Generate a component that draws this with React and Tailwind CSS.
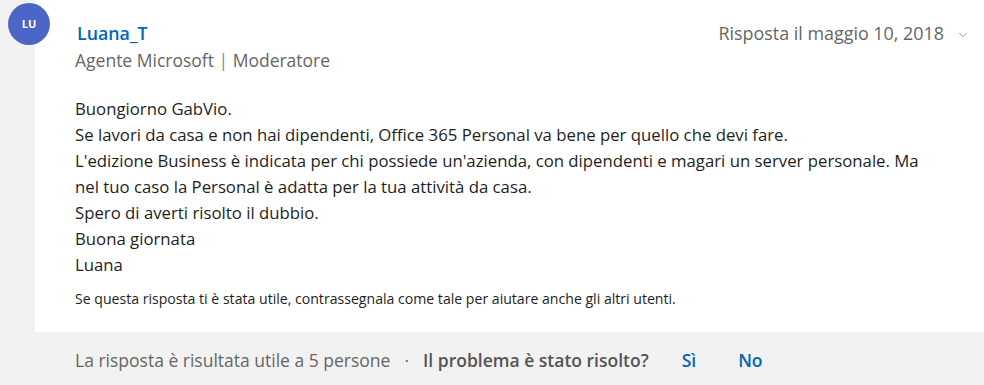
import { ChevronDown } from 'lucide-react'

export default function App() {
  return (
    <div className="w-[984px] h-[385px] flex bg-[#f2f2f2] overflow-hidden font-['Open_Sans','Liberation_Sans',sans-serif]">
      {/* colonna sinistra */}
      <div className="w-[35px] shrink-0 relative">
        <div className="absolute left-[8px] top-[3px] w-[42px] h-[42px] rounded-full bg-[#4b66c6] flex items-center justify-center z-10">
          <span className="text-white text-[11px] font-bold">LU</span>
        </div>
      </div>

      <div className="flex-1 flex flex-col bg-white">
        <div className="flex-1 pl-[40px] pr-[14px]">
          <div className="flex justify-between pt-[21px]">
            <div>
              <div className="text-[#0067b8] text-[17.8px] font-semibold leading-[24px] pl-[2px]">Luana_T</div>
              <div className="text-[#666] text-[17.5px] leading-[26px] pt-[2px]">
                Agente Microsoft <span className="text-[#888]">|</span> Moderatore
              </div>
            </div>
            <div className="flex items-start gap-[12px] text-[#666] text-[17.9px] leading-[24px]">
              <span>Risposta il maggio 10, 2018</span>
              <ChevronDown size={14} strokeWidth={1.5} className="mt-[7px] text-[#888]" />
            </div>
          </div>

          <div className="mt-[23px] mr-[30px] text-[16.75px] leading-[26px] text-[#1e1e1e]">
            <p>Buongiorno GabVio.</p>
            <p>Se lavori da casa e non hai dipendenti, Office 365 Personal va bene per quello che devi fare.</p>
            <p>L'edizione Business è indicata per chi possiede un'azienda, con dipendenti e magari un server personale. Ma nel tuo caso la Personal è adatta per la tua attività da casa.</p>
            <p>Spero di averti risolto il dubbio.</p>
            <p>Buona giornata</p>
            <p>Luana</p>
          </div>

          <p className="mt-[12px] text-[14.1px] text-[#1e1e1e] leading-[18px]">
            Se questa risposta ti è stata utile, contrassegnala come tale per aiutare anche gli altri utenti.
          </p>
        </div>

        <div className="h-[53px] bg-[#f2f2f2] flex items-center pl-[40px] pt-[3px] text-[17.5px]">
          <span className="text-[#666]">La risposta è risultata utile a 5 persone</span>
          <span className="text-[#666] mx-[14px]">·</span>
          <span className="text-[#555] font-semibold">Il problema è stato risolto?</span>
          <span className="text-[#0067b8] font-semibold ml-[33px]">Sì</span>
          <span className="text-[#0067b8] font-semibold ml-[42px]">No</span>
        </div>
      </div>
    </div>
  )
}
